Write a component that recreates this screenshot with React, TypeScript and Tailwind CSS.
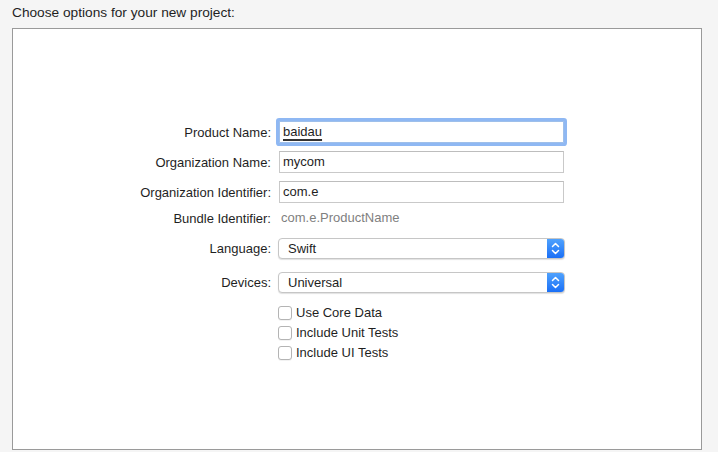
import React from "react";

const font = { fontFamily: '"Liberation Sans", Arial, sans-serif' };

function Label({ children }: { children: React.ReactNode }) {
  return (
    <div className="w-[258px] shrink-0 text-right text-[13px] text-[#1f1f1f] leading-none">
      {children}
    </div>
  );
}

function TextField({ value, focused, underline }: { value: string; focused?: boolean; underline?: boolean }) {
  return (
    <div
      className={
        "ml-[8px] h-[22px] w-[285px] bg-white border flex items-center pl-[3px] text-[13px] text-[#1e1e1e] " +
        (focused
          ? "border-[#9ebfea] shadow-[0_0_0_3px_#8fb8f3] rounded-[1px]"
          : "border-[#c9c9c9] border-t-[#bdbdbd]")
      }
    >
      <span className={underline ? "underline decoration-[2px] underline-offset-[3px] decoration-[#333]" : ""}>{value}</span>
    </div>
  );
}

function Popup({ value }: { value: string }) {
  return (
    <div className="ml-[7px] h-[21px] w-[287px] flex rounded-[4px] bg-white border border-[#c6c6c6] shadow-[0_1px_1px_rgba(0,0,0,0.12)] overflow-hidden">
      <div className="flex-1 flex items-center pl-[9px] text-[13px] text-[#1e1e1e]">{value}</div>
      <div className="w-[17px] flex items-center justify-center bg-gradient-to-b from-[#4fa1fd] to-[#1a6ff6]">
        <svg width="9" height="13" viewBox="0 0 9 13" fill="none">
          <path d="M1.5 4.5 L4.5 1.5 L7.5 4.5" stroke="white" strokeWidth="1.5" strokeLinecap="round" strokeLinejoin="round" />
          <path d="M1.5 8.5 L4.5 11.5 L7.5 8.5" stroke="white" strokeWidth="1.5" strokeLinecap="round" strokeLinejoin="round" />
        </svg>
      </div>
    </div>
  );
}

function Check({ label }: { label: string }) {
  return (
    <div className="h-[20px] flex items-center pl-[265px]">
      <div className="w-[14px] h-[14px] rounded-[3px] border border-[#b4b4b4] bg-white shadow-[0_1px_0_rgba(0,0,0,0.05)]" />
      <span className="ml-[4px] text-[13px] text-[#1f1f1f]">{label}</span>
    </div>
  );
}

export default function App() {
  return (
    <div className="w-[718px] h-[452px] bg-[#f5f5f5] overflow-hidden" style={font}>
      <div className="pl-[12px] pt-[5px] h-[28px] text-[13.7px] text-[#1f1f1f] leading-[15px]">
        Choose options for your new project:
      </div>
      <div className="ml-[12px] w-[690px] h-[422px] bg-white border border-[#9a9a9a] pt-[92px]">
        <div className="flex items-center h-[22px]">
          <Label>Product Name:</Label>
          <TextField value="baidau" focused underline />
        </div>
        <div className="flex items-center h-[22px] mt-[8px]">
          <Label>Organization Name:</Label>
          <TextField value="mycom" />
        </div>
        <div className="flex items-center h-[22px] mt-[8px]">
          <Label>Organization Identifier:</Label>
          <TextField value="com.e" />
        </div>
        <div className="flex items-center h-[22px] mt-[4px]">
          <Label>Bundle Identifier:</Label>
          <div className="ml-[10px] text-[13px] text-[#7f7f7f]">com.e.ProductName</div>
        </div>
        <div className="flex items-center h-[21px] mt-[9px]">
          <Label>Language:</Label>
          <Popup value="Swift" />
        </div>
        <div className="flex items-center h-[21px] mt-[13px]">
          <Label>Devices:</Label>
          <Popup value="Universal" />
        </div>
        <div className="mt-[10px]">
          <Check label="Use Core Data" />
          <Check label="Include Unit Tests" />
          <Check label="Include UI Tests" />
        </div>
      </div>
    </div>
  );
}
